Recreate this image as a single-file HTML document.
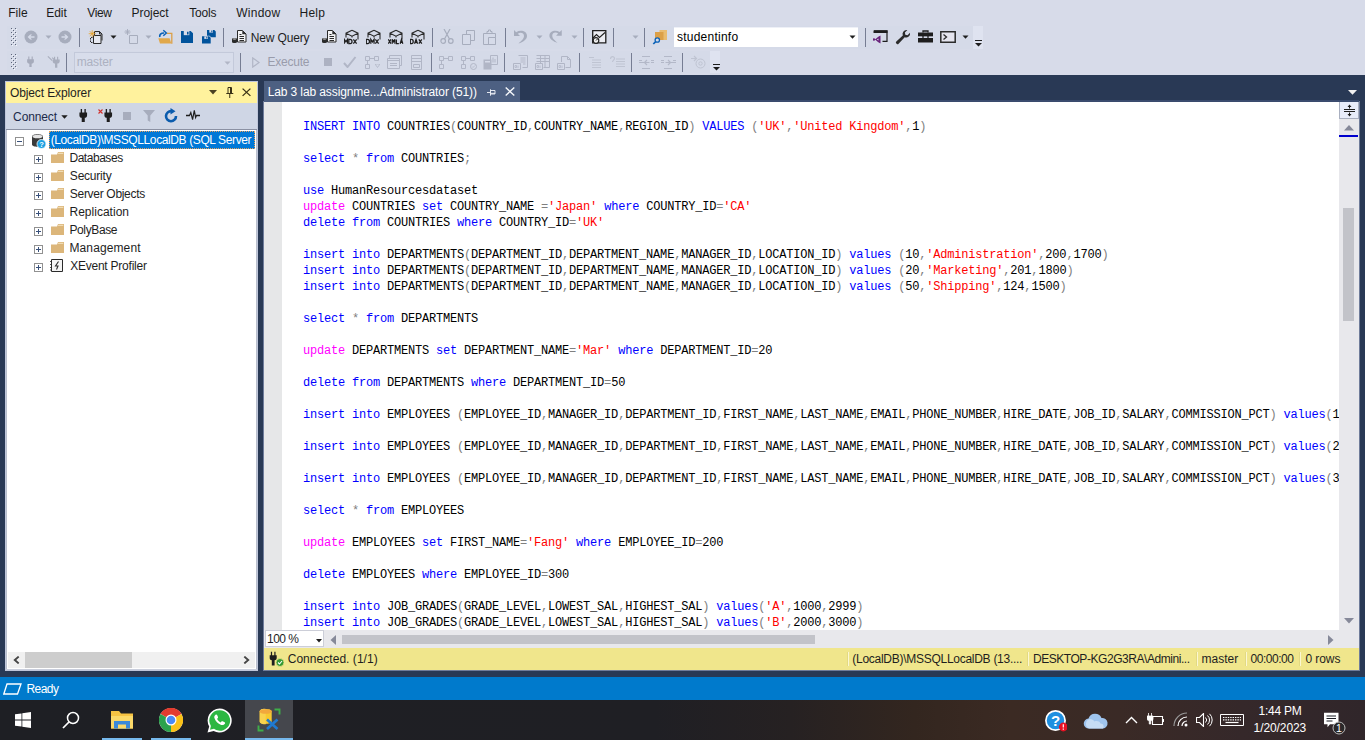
<!DOCTYPE html>
<html><head><meta charset="utf-8"><title>SSMS</title>
<style>
*{box-sizing:border-box;margin:0;padding:0}
html,body{width:1365px;height:740px;overflow:hidden;background:#293955;font-family:"Liberation Sans",sans-serif;font-size:12px;color:#1e1e1e}
.abs{position:absolute}
span.abs,.t{white-space:nowrap}
#chrome{left:0;top:0;width:1365px;height:75px;background:#d7dbe9}
.menu{position:absolute;top:5px;font-size:13px;color:#1b1b1b}
.sep{position:absolute;width:1px;background:#767d93}
.grip{position:absolute;width:5px;height:18px;background-image:radial-gradient(circle,#7f879b 0.6px,transparent 0.9px);background-size:2px 2px;opacity:.9}
#dock{left:0;top:75px;width:1365px;height:602px;background:#293955}
#oe{left:6px;top:82px;width:251px;height:588px;background:#fff;overflow:hidden}
#oetitle{left:0;top:0;width:251px;height:21px;background:#fff29d}
#oebar{left:0;top:21px;width:251px;height:26px;background:#cfd6e5}
.tr{position:absolute;font-size:12px;color:#1e1e1e;white-space:nowrap;letter-spacing:.1px}
.pm{position:absolute;width:9px;height:9px;border:1px solid #919191;background:#fff}
.pm:before{content:"";position:absolute;left:1px;top:3px;width:5px;height:1px;background:#38507a}
.pm.p:after{content:"";position:absolute;left:3px;top:1px;width:1px;height:5px;background:#38507a}
#tab{left:264px;top:81px;width:256px;height:21px;background:#4d6082}
#tabline{left:264px;top:100px;width:1095px;height:2px;background:#3a4b6e}
#ed{left:264px;top:102px;width:1095px;height:568px;background:#fff;overflow:hidden}
#gutter{left:0;top:0;width:18px;height:528px;background:#e6e7e8}
#codeclip{left:18px;top:0;width:1057px;height:528px;overflow:hidden}
pre.code{position:absolute;left:21px;top:17px;font-family:"Liberation Mono",monospace;font-size:12px;line-height:16px;letter-spacing:-0.2px;color:#000;white-space:pre}
.k{color:#0000ff}.m{color:#ff00ff}.s{color:#ff0000}.g{color:#808080}
#vs{left:1075px;top:0;width:20px;height:528px;background:#e8e8ec}
#hs{left:0;top:528px;width:1095px;height:18px;background:#e8e8ec}
#qs{left:0;top:546px;width:1095px;height:22px;background:#f0e68c}
.q{position:absolute;top:4px;font-size:12px;color:#1e1e1e;white-space:nowrap}
.qsep{position:absolute;top:4px;width:1px;height:14px;background:#fbf7d2;box-shadow:-1px 0 0 #e2d982}
#status{left:0;top:677px;width:1365px;height:23px;background:#007acc}
#task{left:0;top:700px;width:1365px;height:40px;background:linear-gradient(90deg,#1e1f24 0%,#1f1f24 48%,#262122 58%,#33261f 67%,#3b2a23 74%,#3a2a26 82%,#35282a 91%,#30262a 100%)}
</style></head><body>
<div id="chrome" class="abs">
<span class="abs" style="left:8.14px;top:6.00px;font-size:12px;line-height:14px;letter-spacing:0.073px;color:#1b1b1b;">File</span>
<span class="abs" style="left:46.24px;top:6.00px;font-size:12px;line-height:14px;letter-spacing:-0.060px;color:#1b1b1b;">Edit</span>
<span class="abs" style="left:87.20px;top:6.00px;font-size:12px;line-height:14px;letter-spacing:-0.333px;color:#1b1b1b;">View</span>
<span class="abs" style="left:131.44px;top:6.00px;font-size:12px;line-height:14px;letter-spacing:-0.027px;color:#1b1b1b;">Project</span>
<span class="abs" style="left:189.26px;top:6.00px;font-size:12px;line-height:14px;letter-spacing:-0.165px;color:#1b1b1b;">Tools</span>
<span class="abs" style="left:236.30px;top:6.00px;font-size:12px;line-height:14px;letter-spacing:0.236px;color:#1b1b1b;">Window</span>
<span class="abs" style="left:299.44px;top:6.00px;font-size:12px;line-height:14px;letter-spacing:0.293px;color:#1b1b1b;">Help</span>
<div class="abs" style="left:7px;top:26px;width:966px;height:23px;background:#d5dae8"></div>
<div class="abs" style="left:973px;top:26px;width:10px;height:23px;background:#dfe3f0"></div>
<div class="abs" style="left:7px;top:51px;width:703px;height:22px;background:#d5dae8"></div>
<div class="abs" style="left:710px;top:51px;width:10px;height:22px;background:#dfe3f0"></div>
<svg class="abs" style="left:11px;top:28px" width="6" height="18" viewBox="0 0 6 18" shape-rendering="crispEdges"><rect x="0" y="0" width="1" height="1" fill="#5d6579"/><rect x="1" y="1" width="1" height="1" fill="#f2f4fa"/><rect x="4" y="0" width="1" height="1" fill="#5d6579"/><rect x="5" y="1" width="1" height="1" fill="#f2f4fa"/><rect x="2" y="2" width="1" height="1" fill="#5d6579"/><rect x="3" y="3" width="1" height="1" fill="#f2f4fa"/><rect x="0" y="4" width="1" height="1" fill="#5d6579"/><rect x="1" y="5" width="1" height="1" fill="#f2f4fa"/><rect x="4" y="4" width="1" height="1" fill="#5d6579"/><rect x="5" y="5" width="1" height="1" fill="#f2f4fa"/><rect x="2" y="6" width="1" height="1" fill="#5d6579"/><rect x="3" y="7" width="1" height="1" fill="#f2f4fa"/><rect x="0" y="8" width="1" height="1" fill="#5d6579"/><rect x="1" y="9" width="1" height="1" fill="#f2f4fa"/><rect x="4" y="8" width="1" height="1" fill="#5d6579"/><rect x="5" y="9" width="1" height="1" fill="#f2f4fa"/><rect x="2" y="10" width="1" height="1" fill="#5d6579"/><rect x="3" y="11" width="1" height="1" fill="#f2f4fa"/><rect x="0" y="12" width="1" height="1" fill="#5d6579"/><rect x="1" y="13" width="1" height="1" fill="#f2f4fa"/><rect x="4" y="12" width="1" height="1" fill="#5d6579"/><rect x="5" y="13" width="1" height="1" fill="#f2f4fa"/><rect x="2" y="14" width="1" height="1" fill="#5d6579"/><rect x="3" y="15" width="1" height="1" fill="#f2f4fa"/><rect x="0" y="16" width="1" height="1" fill="#5d6579"/><rect x="1" y="17" width="1" height="1" fill="#f2f4fa"/><rect x="4" y="16" width="1" height="1" fill="#5d6579"/><rect x="5" y="17" width="1" height="1" fill="#f2f4fa"/></svg><svg class="abs" style="left:11px;top:54px" width="6" height="16" viewBox="0 0 6 16" shape-rendering="crispEdges"><rect x="0" y="0" width="1" height="1" fill="#5d6579"/><rect x="1" y="1" width="1" height="1" fill="#f2f4fa"/><rect x="4" y="0" width="1" height="1" fill="#5d6579"/><rect x="5" y="1" width="1" height="1" fill="#f2f4fa"/><rect x="2" y="2" width="1" height="1" fill="#5d6579"/><rect x="3" y="3" width="1" height="1" fill="#f2f4fa"/><rect x="0" y="4" width="1" height="1" fill="#5d6579"/><rect x="1" y="5" width="1" height="1" fill="#f2f4fa"/><rect x="4" y="4" width="1" height="1" fill="#5d6579"/><rect x="5" y="5" width="1" height="1" fill="#f2f4fa"/><rect x="2" y="6" width="1" height="1" fill="#5d6579"/><rect x="3" y="7" width="1" height="1" fill="#f2f4fa"/><rect x="0" y="8" width="1" height="1" fill="#5d6579"/><rect x="1" y="9" width="1" height="1" fill="#f2f4fa"/><rect x="4" y="8" width="1" height="1" fill="#5d6579"/><rect x="5" y="9" width="1" height="1" fill="#f2f4fa"/><rect x="2" y="10" width="1" height="1" fill="#5d6579"/><rect x="3" y="11" width="1" height="1" fill="#f2f4fa"/><rect x="0" y="12" width="1" height="1" fill="#5d6579"/><rect x="1" y="13" width="1" height="1" fill="#f2f4fa"/><rect x="4" y="12" width="1" height="1" fill="#5d6579"/><rect x="5" y="13" width="1" height="1" fill="#f2f4fa"/><rect x="2" y="14" width="1" height="1" fill="#5d6579"/><rect x="3" y="15" width="1" height="1" fill="#f2f4fa"/></svg>
<div class="sep" style="left:79px;top:28px;height:19px"></div>
<div class="sep" style="left:223px;top:28px;height:19px"></div>
<div class="sep" style="left:432px;top:28px;height:19px"></div>
<div class="sep" style="left:505px;top:28px;height:19px"></div>
<div class="sep" style="left:583px;top:28px;height:19px"></div>
<div class="sep" style="left:613px;top:28px;height:19px"></div>
<div class="sep" style="left:644px;top:28px;height:19px"></div>
<div class="sep" style="left:865px;top:28px;height:19px"></div>
<div class="sep" style="left:66px;top:53px;height:19px"></div>
<div class="sep" style="left:240px;top:53px;height:19px"></div>
<div class="sep" style="left:431px;top:53px;height:19px"></div>
<div class="sep" style="left:504px;top:53px;height:19px"></div>
<div class="sep" style="left:579px;top:53px;height:19px"></div>
<div class="sep" style="left:631px;top:53px;height:19px"></div>
<div class="sep" style="left:682px;top:53px;height:19px"></div>
<svg class="abs" style="left:24px;top:30px" width="14" height="14" viewBox="0 0 14 14" ><circle cx="7" cy="7" r="6.5" fill="#a7adbd"/><path d="M10.5 6.2H6.4l1.7-1.8H6.2L3.6 7l2.6 2.6h1.9L6.4 7.8h4.1z" fill="#d6dbe9"/></svg>
<svg class="abs" style="left:45px;top:35px" width="7" height="4" viewBox="0 0 7 4" ><path d="M0.5 0.5h6L3.5 3.7z" fill="#a7adbd"/></svg>
<svg class="abs" style="left:58px;top:30px" width="14" height="14" viewBox="0 0 14 14" ><circle cx="7" cy="7" r="6.5" fill="#a7adbd"/><path d="M3.5 6.2h4.1L5.9 4.4h1.9L10.4 7 7.8 9.6H5.9l1.7-1.8H3.5z" fill="#d6dbe9"/></svg>
<svg class="abs" style="left:88px;top:29px" width="16" height="16" viewBox="0 0 16 16" ><path d="M6.500 6V2.500h5l2.500 2.500V11.500" fill="none" stroke="#2b2b2b"/><path d="M11.500 2.500v2.500h2.500" fill="none" stroke="#2b2b2b"/><path d="M5.500 6.500h7.500v8h-7.500z" fill="#e6e8f0" stroke="#2b2b2b"/><path d="M4.500 8.500h-2v5h2" fill="none" stroke="#2b2b2b" stroke-dasharray="1.500 1"/><path d="M4.200 1.200v7M.7 4.700h7M1.700 2.200l5 5M6.700 2.200l-5 5" stroke="#e9a020" stroke-width=".75"/></svg>
<svg class="abs" style="left:110px;top:35px" width="7" height="4" viewBox="0 0 7 4" ><path d="M0.5 0.5h6L3.5 3.7z" fill="#1e1e1e"/></svg>
<svg class="abs" style="left:124px;top:29px" width="16" height="16" viewBox="0 0 16 16" ><path d="M5.5 6.500h8v8h-8z" fill="none" stroke="#a7adbd"/><path d="M3.5 0v6M.5 3h6M1.500 1l4 4M5.500 1l-4 4" stroke="#a7adbd" stroke-width=".9"/></svg>
<svg class="abs" style="left:145px;top:35px" width="7" height="4" viewBox="0 0 7 4" ><path d="M0.5 0.5h6L3.5 3.7z" fill="#a7adbd"/></svg>
<svg class="abs" style="left:157px;top:29px" width="16" height="16" viewBox="0 0 16 16" ><path d="M9.500 4.300h5.300v10.500" fill="none" stroke="#dca048" stroke-width="1.300"/><path d="M1.300 9.300h11.300l1.700 5.200H3z" fill="#e1a84a"/><path d="M2.800 8c-.5-2.500 1-4 4.200-4" fill="none" stroke="#0b62b8" stroke-width="1.700"/><path d="M6.300 1.300L9.300 4 6.300 6.700" fill="none" stroke="#0b62b8" stroke-width="1.500"/></svg>
<svg class="abs" style="left:181px;top:31px" width="12" height="12" viewBox="0 0 13 13" ><path d="M0 0h10.500L13 2.500V13H0z" fill="#00539c"/><path d="M3 0h6v4.500H3z" fill="#d6dbe9"/><path d="M6.500 .8h1.700v2.900H6.500z" fill="#00539c"/></svg>
<svg class="abs" style="left:202px;top:29px" width="15" height="16" viewBox="0 0 15 16" ><path d="M5 1h7.300l1.500 1.500v5.800H5z" fill="#00539c"/><path d="M7.300 1h3.700v2.600H7.300z" fill="#d6dbe9"/><path d="M9.300 1.400h1.100v1.800H9.300z" fill="#00539c"/><path d="M-.6 6.700h8.200l1.700 1.700v6.600H-.6z" fill="#d6dbe9"/><path d="M0 7.300h7.200l1.500 1.500v5.600H0z" fill="#00539c"/><path d="M2.300 7.300h3.700v2.600H2.300z" fill="#d6dbe9"/><path d="M4.300 7.700h1.100v1.800H4.300z" fill="#00539c"/></svg>
<svg class="abs" style="left:232px;top:30px" width="16" height="15" viewBox="0 0 16 15" ><path d="M5.500 .5h5l3.500 3.500v8h-8.500z" fill="#f4f4f6" stroke="#2b2b2b"/><path d="M10.300 .5v3.700h3.700z" fill="#2b2b2b"/><path d="M7.500 4.500h2M7.500 6.500h4.500M7.500 8.500h4.500M7.500 10.500h4.500" stroke="#2b2b2b"/><path d="M0 9c0-1.300 5-1.300 5 0v3c0 1.400-5 1.400-5 0z" fill="#2b2b2b"/><ellipse cx="2.500" cy="9" rx="1.900" ry=".7" fill="#b5b5b5"/></svg>
<span class="abs" style="left:250.74px;top:31.00px;font-size:12px;line-height:14px;letter-spacing:-0.142px;color:#1e1e1e;">New Query</span>
<svg class="abs" style="left:322px;top:30px" width="16" height="15" viewBox="0 0 16 15" ><path d="M5.500 .5h5l3.500 3.500v8h-8.500z" fill="#f4f4f6" stroke="#2b2b2b"/><path d="M10.300 .5v3.700h3.700z" fill="#2b2b2b"/><path d="M7.500 4.500h2M7.500 6.500h4.500M7.500 8.500h4.500M7.500 10.500h4.500" stroke="#2b2b2b"/><path d="M0 9c0-1.300 5-1.300 5 0v3c0 1.400-5 1.400-5 0z" fill="#2b2b2b"/><ellipse cx="2.500" cy="9" rx="1.900" ry=".7" fill="#b5b5b5"/></svg>
<svg class="abs" style="left:344px;top:29px" width="16" height="16" viewBox="0 0 16 16" ><path d="M8 1.200l6 3v6.300M8 1.200l-6 3v4.300M2 4.200l6 3 6-3M8 7.200v1.300" fill="none" stroke="#2b2b2b" stroke-width="1.100"/><path transform="translate(0.30 10.400) scale(1.078 .86)" d="M0 5V0l1.500 2.800L3 0v5" fill="none" stroke="#1e1e1e" stroke-width="1.250" vector-effect="non-scaling-stroke"/><path transform="translate(4.83 10.400) scale(1.078 .86)" d="M0 0v5h1.300c2.200 0 2.200-5 0-5z" fill="none" stroke="#1e1e1e" stroke-width="1.250" vector-effect="non-scaling-stroke"/><path transform="translate(9.37 10.400) scale(1.078 .86)" d="M0 0l3 5M3 0L0 5" fill="none" stroke="#1e1e1e" stroke-width="1.250" vector-effect="non-scaling-stroke"/></svg>
<svg class="abs" style="left:366px;top:29px" width="16" height="16" viewBox="0 0 16 16" ><path d="M8 1.200l6 3v6.300M8 1.200l-6 3v4.300M2 4.200l6 3 6-3M8 7.200v1.300" fill="none" stroke="#2b2b2b" stroke-width="1.100"/><path transform="translate(0.30 10.400) scale(1.078 .86)" d="M0 0v5h1.300c2.200 0 2.200-5 0-5z" fill="none" stroke="#1e1e1e" stroke-width="1.250" vector-effect="non-scaling-stroke"/><path transform="translate(4.83 10.400) scale(1.078 .86)" d="M0 5V0l1.500 2.800L3 0v5" fill="none" stroke="#1e1e1e" stroke-width="1.250" vector-effect="non-scaling-stroke"/><path transform="translate(9.37 10.400) scale(1.078 .86)" d="M0 0l3 5M3 0L0 5" fill="none" stroke="#1e1e1e" stroke-width="1.250" vector-effect="non-scaling-stroke"/></svg>
<svg class="abs" style="left:388px;top:29px" width="16" height="16" viewBox="0 0 16 16" ><path d="M8 1.200l6 3v6.300M8 1.200l-6 3v4.300M2 4.200l6 3 6-3M8 7.200v1.300" fill="none" stroke="#2b2b2b" stroke-width="1.100"/><path transform="translate(0.30 10.400) scale(0.883 .86)" d="M0 0l3 5M3 0L0 5" fill="none" stroke="#1e1e1e" stroke-width="1.250" vector-effect="non-scaling-stroke"/><path transform="translate(4.25 10.400) scale(0.883 .86)" d="M0 5V0l1.500 2.800L3 0v5" fill="none" stroke="#1e1e1e" stroke-width="1.250" vector-effect="non-scaling-stroke"/><path transform="translate(8.20 10.400) scale(0.883 .86)" d="M.2 0v5h2.800" fill="none" stroke="#1e1e1e" stroke-width="1.250" vector-effect="non-scaling-stroke"/><path transform="translate(12.15 10.400) scale(0.883 .86)" d="M0 5l1.500-5 1.500 5M.6 3.400h1.800" fill="none" stroke="#1e1e1e" stroke-width="1.250" vector-effect="non-scaling-stroke"/></svg>
<svg class="abs" style="left:410px;top:29px" width="16" height="16" viewBox="0 0 16 16" ><path d="M8 1.200l6 3v6.300M8 1.200l-6 3v4.300M2 4.200l6 3 6-3M8 7.200v1.300" fill="none" stroke="#2b2b2b" stroke-width="1.100"/><path transform="translate(0.30 10.400) scale(0.989 .86)" d="M0 0v5h1.300c2.200 0 2.200-5 0-5z" fill="none" stroke="#1e1e1e" stroke-width="1.250" vector-effect="non-scaling-stroke"/><path transform="translate(4.57 10.400) scale(0.989 .86)" d="M0 5l1.500-5 1.500 5M.6 3.400h1.800" fill="none" stroke="#1e1e1e" stroke-width="1.250" vector-effect="non-scaling-stroke"/><path transform="translate(8.83 10.400) scale(0.989 .86)" d="M0 0l3 5M3 0L0 5" fill="none" stroke="#1e1e1e" stroke-width="1.250" vector-effect="non-scaling-stroke"/></svg>
<svg class="abs" style="left:440px;top:29px" width="14" height="16" viewBox="0 0 14 16" ><path d="M4 0l5.500 10M10 0L4.500 10" stroke="#a7adbd" stroke-width="1.200" fill="none"/><circle cx="3.200" cy="12" r="2.300" fill="none" stroke="#a7adbd" stroke-width="1.200"/><circle cx="10.800" cy="12" r="2.300" fill="none" stroke="#a7adbd" stroke-width="1.200"/></svg>
<svg class="abs" style="left:462px;top:29px" width="14" height="16" viewBox="0 0 14 16" ><path d="M4.500 1.500h8v10h-8z" fill="none" stroke="#a7adbd"/><path d="M.5 5.500h8v10h-8z" fill="#d6dbe9" stroke="#a7adbd"/></svg>
<svg class="abs" style="left:483px;top:29px" width="14" height="16" viewBox="0 0 14 16" ><path d="M.5 4.500h12v11H.5z" fill="none" stroke="#a7adbd"/><path d="M4 4.500V2.500h1.500V1h2v1.500H9v2" fill="none" stroke="#a7adbd"/><path d="M5.500 8.500h7v7h-7z" fill="#d6dbe9" stroke="#a7adbd"/></svg>
<svg class="abs" style="left:513px;top:29px" width="16" height="16" viewBox="0 0 16 16" ><path d="M1 1v6h6L4.800 4.800C7 3 11 3.500 11 7c0 3-3 5-5.500 7.500C10 13 14 10.500 14 7 14 2 7.500 .5 3.200 3.200z" fill="#a7adbd"/></svg>
<svg class="abs" style="left:536px;top:35px" width="7" height="4" viewBox="0 0 7 4" ><path d="M0.5 0.5h6L3.5 3.7z" fill="#a7adbd"/></svg>
<svg class="abs" style="left:549px;top:29px" width="16" height="16" viewBox="0 0 16 16" ><path d="M15 1v6H9l2.200-2.200C9 3 5 3.500 5 7c0 3 3 5 5.500 7.500C6 13 2 10.500 2 7 2 2 8.500 .5 12.800 3.200z" fill="#a7adbd" transform="translate(-1.5 0) scale(.95)"/></svg>
<svg class="abs" style="left:571px;top:35px" width="7" height="4" viewBox="0 0 7 4" ><path d="M0.5 0.5h6L3.5 3.7z" fill="#a7adbd"/></svg>
<svg class="abs" style="left:592px;top:30px" width="15" height="14" viewBox="0 0 15 14" ><path d="M.7 .7h13.100v12.100H.7z" fill="#ecedf3" stroke="#1e1e1e" stroke-width="1.300"/><path d="M1 8l3.500-3.500 3 3L13 2.500" fill="none" stroke="#1e1e1e" stroke-width="1.100"/><circle cx="4" cy="10.500" r="2.800" fill="#f3f3f3" stroke="#1e1e1e" stroke-width="1.200"/><path d="M4 10.500l1.500-1.500" stroke="#1e1e1e"/></svg>
<svg class="abs" style="left:632px;top:35px" width="7" height="4" viewBox="0 0 7 4" ><path d="M0.5 0.5h6L3.5 3.7z" fill="#a7adbd"/></svg>
<svg class="abs" style="left:652px;top:29px" width="16" height="16" viewBox="0 0 16 16" ><path d="M7.500 1h7.500v10H7.500z" fill="#e9bc70"/><path d="M3 3h8.500v8H3z" fill="#dca048"/><circle cx="5.300" cy="11" r="2.200" fill="#d6dbe9" stroke="#0b62b8" stroke-width="1.300"/><path d="M3.700 12.700L1.300 15" stroke="#0b62b8" stroke-width="1.700"/></svg>
<div class="abs" style="left:674px;top:27px;width:184px;height:20px;background:#fff;border-top:1px solid #eef0f7"></div>
<span class="abs" style="left:676.90px;top:30.00px;font-size:12px;line-height:14px;letter-spacing:0.250px;color:#000;">studentinfo</span>
<svg class="abs" style="left:849px;top:35px" width="7" height="4" viewBox="0 0 7 4" ><path d="M0.5 0.5h6L3.5 3.7z" fill="#1e1e1e"/></svg>
<svg class="abs" style="left:873px;top:30px" width="15" height="14" viewBox="0 0 15 14" ><path d="M1 .8h13v10.500H9.500" fill="none" stroke="#1e1e1e" stroke-width="1.200"/><path d="M.5 .5h14v2.500H.5z" fill="#1e1e1e"/><path d="M7.500 5.500v8L5.300 12.300 2.300 9.800 1 11 0 10.300V8.700L1 8l1.300 1.200L5.300 6.700zM5.500 8.600L3.800 9.500l1.700 1z" fill="#68217a"/></svg>
<svg class="abs" style="left:895px;top:29px" width="16" height="16" viewBox="0 0 16 16" ><path d="M11.500 1a4 4 0 0 0-3.700 5.400L1.300 12.500a1.300 1.300 0 0 0 0 1.900l.4.400a1.300 1.300 0 0 0 1.900 0L9.700 8.300A4 4 0 0 0 15 3.700L12.500 6.200 10.300 5.800 9.900 3.600 12.400 1.100A4 4 0 0 0 11.500 1z" fill="#2b2b2b"/></svg>
<svg class="abs" style="left:918px;top:30px" width="15" height="13" viewBox="0 0 15 13" ><path d="M5 2.500V1h5v1.500" fill="none" stroke="#1e1e1e" stroke-width="1.300"/><path d="M0 2.500h15v4H0z" fill="#1e1e1e"/><path d="M0 8h15v4.500H0z" fill="#1e1e1e"/><path d="M4 5.500h2v3.500H4zM9 5.500h2v3.500H9z" fill="#1e1e1e"/><path d="M0 6.700h15v1.100H0z" fill="#d6dbe9"/><path d="M4.500 6.500h1v2h-1zM9.500 6.500h1v2h-1z" fill="#1e1e1e"/></svg>
<svg class="abs" style="left:940px;top:31px" width="16" height="12" viewBox="0 0 16 12" ><path d="M.8 .8h14.400v10.400H.8z" fill="#e4e4ee" stroke="#2b2b2b" stroke-width="1.500"/><path d="M3.500 3.500L6.500 6l-3 2.500" fill="none" stroke="#2b2b2b" stroke-width="1.300"/></svg>
<svg class="abs" style="left:962px;top:35px" width="7" height="4" viewBox="0 0 7 4" ><path d="M0.5 0.5h6L3.5 3.7z" fill="#1e1e1e"/></svg>
<svg class="abs" style="left:975px;top:40px" width="7" height="7" viewBox="0 0 7 7" ><path d="M0 .5h7" stroke="#1e1e1e" stroke-width="1"/><path d="M0 3h7L3.500 6.500z" fill="#1e1e1e"/></svg>
<svg class="abs" style="left:25.5px;top:55px" width="9" height="14" viewBox="0 0 12 14.5" ><path d="M3 0h1.500v3.500H3zM7.500 0H9v3.500H7.500zM1.500 3.500h9V7c0 1.500-1.500 2.500-3 2.500V14h-3V9.500c-1.500 0-3-1-3-2.500z" fill="#a6abbb"/></svg>
<svg class="abs" style="left:47px;top:55px" width="14" height="14" viewBox="0 0 16 15" ><path d="M1 1l5 5M6 2.500l4 4" stroke="#a9aebd" stroke-width="1.300"/><path d="M8 1.500h1.300v3H8zM11.500 1.500h1.300v3h-1.300zM6.500 4.500h8V7c0 1.500-1.300 2.300-2.700 2.300V14H9.200V9.300C7.800 9.300 6.500 8.500 6.500 7z" fill="#a9aebd"/></svg>
<div class="abs" style="left:74px;top:52px;width:160px;height:21px;border:1px solid #c3c9da;background:#d8ddeb"></div>
<span class="abs" style="left:76.72px;top:55.00px;font-size:12px;line-height:14px;letter-spacing:-0.132px;color:#acb1c1;">master</span>
<svg class="abs" style="left:224px;top:61px" width="7" height="4" viewBox="0 0 7 4" ><path d="M0.5 0.5h6L3.5 3.7z" fill="#b1b6c6"/></svg>
<svg class="abs" style="left:252px;top:57px" width="8" height="11" viewBox="0 0 8 11" ><path d="M.7 .9v9.200L7 5.500z" fill="none" stroke="#b1b6c6" stroke-width="1.200"/></svg>
<span class="abs" style="left:267.54px;top:55.00px;font-size:12px;line-height:14px;letter-spacing:-0.230px;color:#999cab;">Execute</span>
<div class="abs" style="left:324px;top:58px;width:8px;height:8px;background:#adb2c2"></div>
<svg class="abs" style="left:343px;top:56px" width="14" height="12" viewBox="0 0 14 12" ><path d="M1 7l3.500 4L12.500 1" fill="none" stroke="#b1b6c6" stroke-width="2"/></svg>
<svg class="abs" style="left:365px;top:55px" width="15" height="15" viewBox="0 0 15 15" ><path d="M.5 1.500h4v4h-4zM9.500 1.500h4v4h-4zM.5 9.500h4v4h-4z" fill="none" stroke="#b1b6c6"/><path d="M4.500 3.500h5M2.500 5.500v4" stroke="#b1b6c6"/></svg><svg class="abs" style="left:375px;top:64px" width="5" height="4" viewBox="0 0 5 4" ><path d="M0 0h5L2.500 3.500z" fill="none" stroke="#b1b6c6" stroke-width=".8"/></svg>
<svg class="abs" style="left:387px;top:55px" width="15" height="15" viewBox="0 0 15 15" ><path d="M2.500 .5h12v10h-12z" fill="none" stroke="#b1b6c6"/><path d="M.5 3.500h12v10H.5z" fill="#d6dbe9" stroke="#b1b6c6"/><path d="M.5 5.500h12M3 8.500h7M3 10.500h7" stroke="#b1b6c6"/></svg>
<svg class="abs" style="left:411px;top:55px" width="11" height="15" viewBox="0 0 11 15" ><path d="M.5 .5h10v14H.5z" fill="none" stroke="#b1b6c6"/><path d="M.5 3.500h10M.5 6.500h10M2.500 9.500h6v3h-6z" fill="none" stroke="#b1b6c6"/></svg>
<svg class="abs" style="left:439px;top:55px" width="15" height="15" viewBox="0 0 15 15" ><path d="M.5 1.500h4v4h-4zM9.500 1.500h4v4h-4zM.5 9.500h4v4h-4z" fill="none" stroke="#b1b6c6"/><path d="M4.500 3.500h5M2.500 5.500v4" stroke="#b1b6c6"/></svg>
<svg class="abs" style="left:461px;top:55px" width="15" height="15" viewBox="0 0 15 15" ><path d="M.5 1.500h4v4h-4zM9.500 1.500h4v4h-4zM.5 9.500h4v4h-4z" fill="none" stroke="#b1b6c6"/><path d="M4.500 3.500h5M2.500 5.500v4" stroke="#b1b6c6"/></svg><svg class="abs" style="left:470px;top:63px" width="7" height="7" viewBox="0 0 7 7" ><circle cx="3.500" cy="3.500" r="3" fill="none" stroke="#b1b6c6"/><path d="M2 3.500l1 1 2-2" fill="none" stroke="#b1b6c6" stroke-width=".8"/></svg>
<svg class="abs" style="left:483px;top:55px" width="15" height="15" viewBox="0 0 15 15" ><path d="M7.500 .5h7v9h-7z" fill="none" stroke="#b1b6c6"/><path d="M10 2.500v5M12 4v3.500" stroke="#b1b6c6"/><path d="M.5 4.500h8v10h-8z" fill="#b1b6c6"/><path d="M2 6h5v1.500H2z" fill="#d6dbe9"/></svg>
<svg class="abs" style="left:513px;top:55px" width="15" height="15" viewBox="0 0 15 15" ><path d="M5.500 .5h9v12h-5" fill="none" stroke="#b1b6c6"/><path d="M7.500 3h5M7.500 5h5M7.500 7h5M10 9h2.500" stroke="#b1b6c6" stroke-width=".9"/><path d="M.5 8.500h7v6h-7z" fill="#d6dbe9" stroke="#b1b6c6"/><path d="M2 10.500h1.500v2H2zM5 10.500v2.500" fill="none" stroke="#b1b6c6" stroke-width=".8"/></svg>
<svg class="abs" style="left:535px;top:55px" width="15" height="15" viewBox="0 0 15 15" ><path d="M1.500 .5h13v12h-6" fill="none" stroke="#b1b6c6"/><path d="M1.500 3.500h13M1.500 6.500h13M5.500 .5v8M10 .5v12" stroke="#b1b6c6"/><path d="M.5 8.500h7v6h-7z" fill="#d6dbe9" stroke="#b1b6c6"/><path d="M2 10.500h1.500v2H2zM5 10.500v2.500" fill="none" stroke="#b1b6c6" stroke-width=".8"/></svg>
<svg class="abs" style="left:557px;top:55px" width="15" height="15" viewBox="0 0 15 15" ><path d="M4.500 7V1.500h6l3 3v8h-5" fill="none" stroke="#b1b6c6"/><path d="M10.500 1.500v3h3" fill="none" stroke="#b1b6c6"/><path d="M.5 8.500h7v6h-7z" fill="#d6dbe9" stroke="#b1b6c6"/><path d="M2 10.500h1.500v2H2zM5 10.500v2.500" fill="none" stroke="#b1b6c6" stroke-width=".8"/></svg>
<svg class="abs" style="left:589px;top:57px" width="12" height="12" viewBox="0 0 12 12" ><path d="M0 .5h5M3 3h9M3 5.500h9M3 8h9M3 10.500h9" stroke="#bfc4d2"/></svg>
<svg class="abs" style="left:610px;top:56px" width="15" height="13" viewBox="0 0 15 13" ><path d="M.5 3c0-3 4-3 4-.5 0 1.500-2 1.800-2 3.500" fill="none" stroke="#bfc4d2" stroke-width="1.200"/><path d="M6 3h9M6 5.500h9M6 8h9M6 10.500h9" stroke="#bfc4d2"/></svg>
<svg class="abs" style="left:639px;top:56px" width="15" height="13" viewBox="0 0 15 13" ><path d="M3 .5h8M0 6.500h5M0 4.500h3M12 4.500h3M12 6.500h3M3 12.500h8" stroke="#b3b8c8"/><path d="M10.500 6.500H6M8 4L5.500 6.500 8 9" fill="none" stroke="#b3b8c8" stroke-width="1.200"/></svg>
<svg class="abs" style="left:661px;top:56px" width="15" height="13" viewBox="0 0 15 13" ><path d="M3 .5h8M0 6.500h3M0 4.500h3M12 4.500h3M10 6.500h5M3 12.500h8" stroke="#b3b8c8"/><path d="M4.500 6.500H9M7 4l2.500 2.500L7 9" fill="none" stroke="#b3b8c8" stroke-width="1.200"/></svg>
<svg class="abs" style="left:691px;top:55px" width="15" height="15" viewBox="0 0 15 15" ><path d="M0 3.500h5M3 1l2.500 2.500L3 6" fill="none" stroke="#bfc4d2" stroke-width="1.200"/><circle cx="9.500" cy="8.500" r="4.500" fill="none" stroke="#bfc4d2"/><circle cx="9.500" cy="8.500" r="1.700" fill="none" stroke="#bfc4d2"/></svg>
<svg class="abs" style="left:713px;top:64px" width="7" height="7" viewBox="0 0 7 7" ><path d="M0 .5h7" stroke="#1e1e1e" stroke-width="1"/><path d="M0 3h7L3.500 6.500z" fill="#1e1e1e"/></svg>
</div>
<div id="dock" class="abs"></div>
<div class="abs" style="left:5px;top:81px;width:253px;height:590px;background:#bfc6da"></div>
<div class="abs" style="left:263px;top:101px;width:1097px;height:570px;background:#6f7c9a"></div>
<div id="oe" class="abs">
<div id="oetitle" class="abs"><span class="abs" style="left:3.96px;top:4.00px;font-size:12px;line-height:14px;letter-spacing:-0.109px;color:#1e1e1e;">Object Explorer</span>
<svg class="abs" style="left:203px;top:8px" width="8" height="5" viewBox="0 0 8 5" ><path d="M0 0h8L4 4.500z" fill="#4a4022"/></svg>
<svg class="abs" style="left:220px;top:5px" width="8" height="11" viewBox="0 0 8 11" ><path d="M2 .5h3.500v5.500M2 .5v5.500M4.500 .5v5.500M.3 6.500h7M3.750 6.500v4.500" fill="none" stroke="#3a3216" stroke-width="1"/></svg>
<svg class="abs" style="left:235.5px;top:6px" width="9" height="8.5" viewBox="0 0 9 8.5" ><path d="M.6 .6l7.800 7.300M8.400 .6L.6 7.900" stroke="#3a3216" stroke-width="1.300"/></svg>
</div><div id="oebar" class="abs">
<span class="abs" style="left:7.10px;top:7.00px;font-size:12px;line-height:14px;letter-spacing:-0.123px;color:#1b2a4a;">Connect</span>
<svg class="abs" style="left:55px;top:12px" width="7" height="4" viewBox="0 0 7 4" ><path d="M.3 .3h6.400L3.500 3.800z" fill="#1e1e1e"/></svg>
<svg class="abs" style="left:73px;top:6px" width="8.5" height="13" viewBox="0 0 10 13" preserveAspectRatio="none"><path d="M2 0h1.600v3.500H2zM6.400 0H8v3.500H6.400zM.5 3.500h9v3c0 1.400-1.300 2.300-2.700 2.300V13H3.200V8.800C1.800 8.800.5 7.900.5 6.500z" fill="#1e1e1e"/></svg>
<svg class="abs" style="left:92px;top:6px" width="5" height="5" viewBox="0 0 5 5" ><path d="M.5 .5l4 4M4.500 .5l-4 4" stroke="#d0312d" stroke-width="1.100"/></svg><svg class="abs" style="left:98px;top:6px" width="8.5" height="13" viewBox="0 0 10 13" preserveAspectRatio="none"><path d="M2 0h1.600v3.500H2zM6.400 0H8v3.500H6.400zM.5 3.500h9v3c0 1.400-1.300 2.300-2.700 2.300V13H3.200V8.800C1.800 8.800.5 7.900.5 6.500z" fill="#1e1e1e"/></svg>
<div class="abs" style="left:117px;top:9px;width:8px;height:8px;background:#a7adbd"></div>
<svg class="abs" style="left:137px;top:7px" width="12" height="13" viewBox="0 0 12 13" ><path d="M0 0h12L7.300 5.500V12l-2.600-1.500v-5z" fill="#a7adbd"/></svg>
<svg class="abs" style="left:158px;top:5px" width="14" height="15" viewBox="0 0 14 15" ><path d="M7.500 3.200A5 5 0 1 0 12 8" fill="none" stroke="#0b5cad" stroke-width="2.600"/><path d="M6.500 0l5 3.200-5 3.200z" fill="#0b5cad"/></svg>
<svg class="abs" style="left:180px;top:7px" width="14" height="10" viewBox="0 0 16 10" preserveAspectRatio="none"><path d="M0 5.500h4l1.500-3 2 7 2-9 1.500 7 1-2h4" fill="none" stroke="#1e1e1e" stroke-width="1.300"/></svg>
</div>
<div class="abs" style="left:0;top:47px;width:251px;height:1px;background:#8b91a3"></div>
<div class="pm" style="left:9px;top:55px"></div><div class="abs" style="left:0;top:48px;width:1px;height:540px;background:#b9bfcd"></div><div class="abs" style="left:250px;top:48px;width:1px;height:540px;background:#b9bfcd"></div>
<svg class="abs" style="left:25px;top:51px" width="16" height="16" viewBox="0 0 16 16" ><path d="M1 3.500c0-3 11-3 11 0v8c0 3-11 3-11 0z" fill="#3a3a3a"/><ellipse cx="6.500" cy="3.500" rx="5" ry="1.800" fill="#e4e4e4"/><circle cx="10.500" cy="11" r="4.500" fill="#1ba1e2" stroke="#fff" stroke-width=".8"/><text x="10.500" y="14" font-family="Liberation Sans" font-weight="bold" font-size="7.500" fill="#fff" text-anchor="middle">?</text></svg>
<div class="abs" style="left:43px;top:49px;width:206px;height:18px;background:#0078d7;border:1px dotted #e6a15c"></div>
<span class="abs" style="left:44.68px;top:51.00px;font-size:12px;line-height:14px;letter-spacing:-0.387px;color:#fff;">(LocalDB)\MSSQLLocalDB (SQL Server</span>
<div class="pm p" style="left:28px;top:73px"></div>
<svg class="abs" style="left:45px;top:70px" width="13" height="11" viewBox="0 0 13 11" ><path d="M13 0H7L6 2.500H0V11h13z" fill="#dcb67a"/><path d="M7.300 .7h5v1.300h-5.500z" fill="#f0dcb4"/></svg>
<span class="abs" style="left:63.44px;top:69.00px;font-size:12px;line-height:14px;letter-spacing:-0.460px;color:#1e1e1e;">Databases</span>
<div class="pm p" style="left:28px;top:91px"></div>
<svg class="abs" style="left:45px;top:88px" width="13" height="11" viewBox="0 0 13 11" ><path d="M13 0H7L6 2.500H0V11h13z" fill="#dcb67a"/><path d="M7.300 .7h5v1.300h-5.500z" fill="#f0dcb4"/></svg>
<span class="abs" style="left:63.86px;top:87.00px;font-size:12px;line-height:14px;letter-spacing:-0.226px;color:#1e1e1e;">Security</span>
<div class="pm p" style="left:28px;top:109px"></div>
<svg class="abs" style="left:45px;top:106px" width="13" height="11" viewBox="0 0 13 11" ><path d="M13 0H7L6 2.500H0V11h13z" fill="#dcb67a"/><path d="M7.300 .7h5v1.300h-5.500z" fill="#f0dcb4"/></svg>
<span class="abs" style="left:63.86px;top:105.00px;font-size:12px;line-height:14px;letter-spacing:-0.309px;color:#1e1e1e;">Server Objects</span>
<div class="pm p" style="left:28px;top:127px"></div>
<svg class="abs" style="left:45px;top:124px" width="13" height="11" viewBox="0 0 13 11" ><path d="M13 0H7L6 2.500H0V11h13z" fill="#dcb67a"/><path d="M7.300 .7h5v1.300h-5.500z" fill="#f0dcb4"/></svg>
<span class="abs" style="left:63.44px;top:123.00px;font-size:12px;line-height:14px;letter-spacing:0.024px;color:#1e1e1e;">Replication</span>
<div class="pm p" style="left:28px;top:145px"></div>
<svg class="abs" style="left:45px;top:142px" width="13" height="11" viewBox="0 0 13 11" ><path d="M13 0H7L6 2.500H0V11h13z" fill="#dcb67a"/><path d="M7.300 .7h5v1.300h-5.500z" fill="#f0dcb4"/></svg>
<span class="abs" style="left:63.44px;top:141.00px;font-size:12px;line-height:14px;letter-spacing:-0.380px;color:#1e1e1e;">PolyBase</span>
<div class="pm p" style="left:28px;top:163px"></div>
<svg class="abs" style="left:45px;top:160px" width="13" height="11" viewBox="0 0 13 11" ><path d="M13 0H7L6 2.500H0V11h13z" fill="#dcb67a"/><path d="M7.300 .7h5v1.300h-5.500z" fill="#f0dcb4"/></svg>
<span class="abs" style="left:63.44px;top:159.00px;font-size:12px;line-height:14px;letter-spacing:0.116px;color:#1e1e1e;">Management</span>
<div class="pm p" style="left:28px;top:181px"></div>
<svg class="abs" style="left:44px;top:177px" width="13" height="13" viewBox="0 0 13 13" ><path d="M1.500 .5h11v12h-11z" fill="#f4f4f4" stroke="#2b2b2b"/><path d="M0 2.500h2M0 5.500h2M0 8.500h2M0 11h2" stroke="#2b2b2b" stroke-width=".8"/><path d="M8.500 2.500L5.500 7h2.500l-1.500 3.500" fill="none" stroke="#2b2b2b" stroke-width="1.100"/></svg>
<span class="abs" style="left:64.16px;top:177.00px;font-size:12px;line-height:14px;letter-spacing:-0.230px;color:#1e1e1e;">XEvent Profiler</span>
<div class="abs" style="left:2px;top:570px;width:247px;height:16px;background:#f0f0f0"></div>
<div class="abs" style="left:19px;top:570px;width:107px;height:16px;background:#cdcdcd"></div>
<svg class="abs" style="left:7px;top:574px" width="7" height="8" viewBox="0 0 7 8" ><path d="M5.700 .6L1.800 4l3.900 3.400" fill="none" stroke="#454545" stroke-width="1.900"/></svg>
<svg class="abs" style="left:237px;top:574px" width="7" height="8" viewBox="0 0 7 8" ><path d="M1.300 .6L5.200 4 1.300 7.400" fill="none" stroke="#454545" stroke-width="1.900"/></svg>
<div class="abs" style="left:0;top:587px;width:251px;height:1px;background:#c9cedc"></div>
</div>
<div id="tabline" class="abs"></div><div id="tab" class="abs"><span class="abs" style="left:3.64px;top:4.00px;font-size:12px;line-height:14px;letter-spacing:-0.105px;color:#fff;">Lab 3 lab assignme...Administrator (51))</span>
<svg class="abs" style="left:223px;top:7.5px" width="9" height="7" viewBox="0 0 9 7" ><path d="M0 3.500h3.500M3.500 .3v6.400M3.500 1.500h4.500v3.500h-4.500M3.500 4.300h4.500" fill="none" stroke="#f4f6fa" stroke-width=".9"/></svg>
<svg class="abs" style="left:241px;top:6px" width="10" height="9" viewBox="0 0 10 9" ><path d="M.7 .6l8.600 7.800M9.300 .6L.7 8.400" stroke="#f4f6fa" stroke-width="1.400"/></svg>
</div>
<svg class="abs" style="left:1348px;top:90px" width="9" height="5" viewBox="0 0 9 5" ><path d="M0 0h9L4.500 4.800z" fill="#f0f0f0"/></svg>
<div id="ed" class="abs"><div id="gutter" class="abs"></div><div id="codeclip" class="abs"><pre class="code"><span class="k">INSERT</span> <span class="k">INTO</span> COUNTRIES<span class="g">(</span>COUNTRY_ID<span class="g">,</span>COUNTRY_NAME<span class="g">,</span>REGION_ID<span class="g">)</span> <span class="k">VALUES</span> <span class="g">(</span><span class="s">'UK'</span><span class="g">,</span><span class="s">'United Kingdom'</span><span class="g">,</span>1<span class="g">)</span>

<span class="k">select</span> <span class="g">*</span> <span class="k">from</span> COUNTRIES<span class="g">;</span>

<span class="k">use</span> HumanResourcesdataset
<span class="m">update</span> COUNTRIES <span class="k">set</span> COUNTRY_NAME <span class="g">=</span><span class="s">'Japan'</span> <span class="k">where</span> COUNTRY_ID<span class="g">=</span><span class="s">'CA'</span>
<span class="k">delete</span> <span class="k">from</span> COUNTRIES <span class="k">where</span> COUNTRY_ID<span class="g">=</span><span class="s">'UK'</span>

<span class="k">insert</span> <span class="k">into</span> DEPARTMENTS<span class="g">(</span>DEPARTMENT_ID<span class="g">,</span>DEPARTMENT_NAME<span class="g">,</span>MANAGER_ID<span class="g">,</span>LOCATION_ID<span class="g">)</span> <span class="k">values</span> <span class="g">(</span>10<span class="g">,</span><span class="s">'Administration'</span><span class="g">,</span>200<span class="g">,</span>1700<span class="g">)</span>
<span class="k">insert</span> <span class="k">into</span> DEPARTMENTS<span class="g">(</span>DEPARTMENT_ID<span class="g">,</span>DEPARTMENT_NAME<span class="g">,</span>MANAGER_ID<span class="g">,</span>LOCATION_ID<span class="g">)</span> <span class="k">values</span> <span class="g">(</span>20<span class="g">,</span><span class="s">'Marketing'</span><span class="g">,</span>201<span class="g">,</span>1800<span class="g">)</span>
<span class="k">insert</span> <span class="k">into</span> DEPARTMENTS<span class="g">(</span>DEPARTMENT_ID<span class="g">,</span>DEPARTMENT_NAME<span class="g">,</span>MANAGER_ID<span class="g">,</span>LOCATION_ID<span class="g">)</span> <span class="k">values</span> <span class="g">(</span>50<span class="g">,</span><span class="s">'Shipping'</span><span class="g">,</span>124<span class="g">,</span>1500<span class="g">)</span>

<span class="k">select</span> <span class="g">*</span> <span class="k">from</span> DEPARTMENTS

<span class="m">update</span> DEPARTMENTS <span class="k">set</span> DEPARTMENT_NAME<span class="g">=</span><span class="s">'Mar'</span> <span class="k">where</span> DEPARTMENT_ID<span class="g">=</span>20

<span class="k">delete</span> <span class="k">from</span> DEPARTMENTS <span class="k">where</span> DEPARTMENT_ID<span class="g">=</span>50

<span class="k">insert</span> <span class="k">into</span> EMPLOYEES <span class="g">(</span>EMPLOYEE_ID<span class="g">,</span>MANAGER_ID<span class="g">,</span>DEPARTMENT_ID<span class="g">,</span>FIRST_NAME<span class="g">,</span>LAST_NAME<span class="g">,</span>EMAIL<span class="g">,</span>PHONE_NUMBER<span class="g">,</span>HIRE_DATE<span class="g">,</span>JOB_ID<span class="g">,</span>SALARY<span class="g">,</span>COMMISSION_PCT<span class="g">)</span> <span class="k">values</span><span class="g">(</span>100<span class="g">,</span><span class="s">'x'</span>

<span class="k">insert</span> <span class="k">into</span> EMPLOYEES <span class="g">(</span>EMPLOYEE_ID<span class="g">,</span>MANAGER_ID<span class="g">,</span>DEPARTMENT_ID<span class="g">,</span>FIRST_NAME<span class="g">,</span>LAST_NAME<span class="g">,</span>EMAIL<span class="g">,</span>PHONE_NUMBER<span class="g">,</span>HIRE_DATE<span class="g">,</span>JOB_ID<span class="g">,</span>SALARY<span class="g">,</span>COMMISSION_PCT<span class="g">)</span> <span class="k">values</span><span class="g">(</span>200<span class="g">,</span><span class="s">'x'</span>

<span class="k">insert</span> <span class="k">into</span> EMPLOYEES <span class="g">(</span>EMPLOYEE_ID<span class="g">,</span>MANAGER_ID<span class="g">,</span>DEPARTMENT_ID<span class="g">,</span>FIRST_NAME<span class="g">,</span>LAST_NAME<span class="g">,</span>EMAIL<span class="g">,</span>PHONE_NUMBER<span class="g">,</span>HIRE_DATE<span class="g">,</span>JOB_ID<span class="g">,</span>SALARY<span class="g">,</span>COMMISSION_PCT<span class="g">)</span> <span class="k">values</span><span class="g">(</span>300<span class="g">,</span><span class="s">'x'</span>

<span class="k">select</span> <span class="g">*</span> <span class="k">from</span> EMPLOYEES

<span class="m">update</span> EMPLOYEES <span class="k">set</span> FIRST_NAME<span class="g">=</span><span class="s">'Fang'</span> <span class="k">where</span> EMPLOYEE_ID<span class="g">=</span>200

<span class="k">delete</span> EMPLOYEES <span class="k">where</span> EMPLOYEE_ID<span class="g">=</span>300

<span class="k">insert</span> <span class="k">into</span> JOB_GRADES<span class="g">(</span>GRADE_LEVEL<span class="g">,</span>LOWEST_SAL<span class="g">,</span>HIGHEST_SAL<span class="g">)</span> <span class="k">values</span><span class="g">(</span><span class="s">'A'</span><span class="g">,</span>1000<span class="g">,</span>2999<span class="g">)</span>
<span class="k">insert</span> <span class="k">into</span> JOB_GRADES<span class="g">(</span>GRADE_LEVEL<span class="g">,</span>LOWEST_SAL<span class="g">,</span>HIGHEST_SAL<span class="g">)</span> <span class="k">values</span><span class="g">(</span><span class="s">'B'</span><span class="g">,</span>2000<span class="g">,</span>3000<span class="g">)</span></pre></div>
<div id="vs" class="abs">
<div class="abs" style="left:0;top:0;width:20px;height:17px;background:#e8ecfa;border:1px solid #a9afc0;border-top:0"></div>
<svg class="abs" style="left:5px;top:2px" width="11" height="13" viewBox="0 0 11 13" ><path d="M0 5.500h11M0 7.500h11M5.500 1v3.500M5.500 8.500V12" stroke="#1e1e1e" stroke-width="1"/><path d="M3.500 3L5.500 .5l2 2.500zM3.500 10l2 2.500 2-2.500z" fill="#1e1e1e"/></svg>
<svg class="abs" style="left:5px;top:23px" width="10" height="6" viewBox="0 0 10 6" ><path d="M0 5.500h10L5 0z" fill="#868999"/></svg>
<div class="abs" style="left:0;top:33px;width:19px;height:2px;background:#0000cd"></div>
<div class="abs" style="left:4px;top:106px;width:11px;height:113px;background:#c2c3c9"></div>
<svg class="abs" style="left:5px;top:516px" width="10" height="6" viewBox="0 0 10 6" ><path d="M0 0h10L5 5.500z" fill="#868999"/></svg>
</div>
<div id="hs" class="abs">
<div class="abs" style="left:1px;top:0;width:59px;height:17px;background:#fff;border:1px solid #ccced8"></div>
<span class="abs" style="left:3.10px;top:2.00px;font-size:12px;line-height:14px;letter-spacing:-0.575px;color:#1e1e1e;">100 %</span>
<svg class="abs" style="left:52px;top:9px" width="6" height="4" viewBox="0 0 6 4" ><path d="M0 0h6L3 3.500z" fill="#1e1e1e"/></svg>
<svg class="abs" style="left:66px;top:5px" width="6" height="10" viewBox="0 0 6 10" ><path d="M6 0v10L.5 5z" fill="#868999"/></svg>
<div class="abs" style="left:78px;top:5px;width:473px;height:9px;background:#c2c3c9"></div>
<svg class="abs" style="left:1064px;top:5px" width="6" height="10" viewBox="0 0 6 10" ><path d="M0 0v10l5.500-5z" fill="#868999"/></svg>
</div>
<div id="qs" class="abs">
<svg class="abs" style="left:5px;top:3px" width="16" height="16" viewBox="0 0 16 16" ><g transform="translate(.3 .8) scale(.78 .97)"><path d="M2 0h1.600v3.500H2zM6.400 0H8v3.500H6.400zM.5 3.500h9v3c0 1.400-1.300 2.300-2.700 2.300V14H3.200V8.800C1.800 8.800.5 7.900.5 6.500z" fill="#1e1e1e"/></g><circle cx="11" cy="11.500" r="4" fill="#339933" stroke="#f0e68c" stroke-width=".8"/><path d="M9 11.500l1.500 1.500 2.500-3" fill="none" stroke="#fff" stroke-width="1.100"/></svg>
<span class="abs" style="left:23.70px;top:4.00px;font-size:12px;line-height:14px;letter-spacing:0.041px;color:#1e1e1e;">Connected. (1/1)</span>
<div class="qsep" style="left:584px"></div><span class="abs" style="left:588.28px;top:4.00px;font-size:12px;line-height:14px;letter-spacing:-0.272px;color:#1e1e1e;">(LocalDB)\MSSQLLocalDB (13....</span>
<div class="qsep" style="left:764px"></div><span class="abs" style="left:768.94px;top:4.00px;font-size:12px;line-height:14px;letter-spacing:-0.448px;color:#1e1e1e;">DESKTOP-KG2G3RA\Admini...</span>
<div class="qsep" style="left:933px"></div><span class="abs" style="left:937.52px;top:4.00px;font-size:12px;line-height:14px;letter-spacing:-0.012px;color:#1e1e1e;">master</span>
<div class="qsep" style="left:982px"></div><span class="abs" style="left:986.58px;top:4.00px;font-size:12px;line-height:14px;letter-spacing:-0.491px;color:#1e1e1e;">00:00:00</span>
<div class="qsep" style="left:1036px"></div><span class="abs" style="left:1041.38px;top:4.00px;font-size:12px;line-height:14px;letter-spacing:-0.060px;color:#1e1e1e;">0 rows</span>
</div></div>
<div id="status" class="abs"><svg class="abs" style="left:3px;top:6px" width="20" height="12" viewBox="0 0 20 12" ><path d="M4 1h14l-3.500 10H.8z" fill="none" stroke="#fff" stroke-width="1.300"/></svg><span class="abs" style="left:26.54px;top:5.00px;font-size:12px;line-height:14px;letter-spacing:-0.580px;color:#fff;">Ready</span></div>
<div id="task" class="abs">
<div class="abs" style="left:245px;top:0;width:48px;height:40px;background:#45474d"></div>
<div class="abs" style="left:102px;top:38px;width:40px;height:2px;background:#76b9ed"></div>
<div class="abs" style="left:151px;top:38px;width:40px;height:2px;background:#76b9ed"></div>
<div class="abs" style="left:245px;top:38px;width:48px;height:2px;background:#76b9ed"></div>
<svg class="abs" style="left:15px;top:12px" width="16" height="16" viewBox="0 0 16 16" ><path d="M0 2.300L6.500 1.400V7.600H0zM7.300 1.300L16 0v7.600H7.300zM0 8.400h6.500v6.200L0 13.700zM7.300 8.400H16V16l-8.700-1.200z" fill="#fff"/></svg>
<svg class="abs" style="left:62px;top:11px" width="18" height="18" viewBox="0 0 18 18" ><circle cx="11" cy="7" r="5.500" fill="none" stroke="#fff" stroke-width="1.500"/><path d="M7 11L1 17" stroke="#fff" stroke-width="1.700"/></svg>
<svg class="abs" style="left:110px;top:10px" width="24" height="20" viewBox="0 0 24 20" ><path d="M1 1h8l2 2.500h12v15H1z" fill="#f6c343"/><path d="M1 6h22v12.500H1z" fill="#fbd969"/><path d="M4 11h16v7.500H4z" fill="#3b8ad9"/><path d="M8 14.500h8v4H8z" fill="#fbd969"/></svg>
<svg class="abs" style="left:159px;top:8px" width="24" height="24" viewBox="0 0 24 24" ><circle cx="12" cy="12" r="12" fill="#fff"/><path d="M12 12L1.600 6A12 12 0 0 1 22.400 6z" fill="#e33b2e"/><path d="M12 12L22.400 6A12 12 0 0 1 12 24z" fill="#fbc116"/><path d="M12 12L12 24A12 12 0 0 1 1.600 6z" fill="#2ba24c"/><path d="M1.600 6A12 12 0 0 1 22.400 6H12z" fill="#e33b2e"/><circle cx="12" cy="12" r="5.500" fill="#fff"/><circle cx="12" cy="12" r="4.300" fill="#4a8af4"/></svg>
<svg class="abs" style="left:207px;top:8px" width="25" height="25" viewBox="0 0 25 25" ><path d="M12.500 .5a12 12 0 0 0-10.300 18L.5 24.500l6.200-1.600A12 12 0 1 0 12.500 .5z" fill="#fff"/><path d="M12.500 2.300a10.200 10.200 0 0 0-8.600 15.600L3 21.800l4-1A10.200 10.200 0 1 0 12.500 2.300z" fill="#2cb742"/><path d="M8.600 6.800c.5-.5 1.200-.4 1.500.2l.9 2c.2.500 0 .9-.4 1.300l-.5.600c.8 1.500 2 2.700 3.600 3.500l.7-.8c.4-.4.800-.5 1.300-.3l1.900 1c.6.300.7 1 .3 1.500-.9 1.200-2.300 1.600-3.700 1.100-3.300-1.100-5.800-3.600-6.800-6.800-.4-1.300 0-2.500 1.200-3.300z" fill="#fff"/></svg>
<svg class="abs" style="left:257px;top:8px" width="26" height="26" viewBox="0 0 26 26" ><path d="M2.700 3.500c0-3.200 12-3.200 12 0v10c0 3.200-12 3.200-12 0z" fill="#f7c92f"/><path d="M2.700 3.500c0-3.200 6-3.200 6-2.400v15.200c-3 0-6-.8-6-2.800z" fill="#f9d24e"/><ellipse cx="8.700" cy="3.500" rx="6" ry="2.300" fill="#f2a83c"/><path d="M17.500 1.500h5v5M1.500 17.500v5h5" fill="none" stroke="#3fae49" stroke-width="1.900"/><path d="M10 11.500l10.500 9.500M20.500 11.500L10 21" stroke="#1f7ad1" stroke-width="2.700"/></svg>
<svg class="abs" style="left:1045px;top:10px" width="22" height="22" viewBox="0 0 22 22" ><circle cx="10.500" cy="10.500" r="9.600" fill="#1e8fe0" stroke="#fff" stroke-width="1.700"/><text x="10.500" y="16" font-family="Liberation Sans" font-weight="bold" font-size="15" fill="#fff" text-anchor="middle">?</text><circle cx="18.300" cy="17" r="4.400" fill="#e81123"/><path d="M18.300 14.300v3.300M18.300 18.600v1.200" stroke="#fff" stroke-width="1.200"/></svg>
<svg class="abs" style="left:1083px;top:13px" width="26" height="16" viewBox="0 0 26 16" ><path d="M6 15.500a5 5 0 0 1-.5-10A7 7 0 0 1 18.500 5a5.300 5.300 0 0 1 1.500 10.500z" fill="#9fc4ee"/><path d="M6 15.500a5 5 0 0 1 1-9.500c2 0 3.500 1 4.500 2.500 2-1 5-.5 6 2 3 0 4 3 2.500 5z" fill="#c6dcf5"/></svg>
<svg class="abs" style="left:1125px;top:16px" width="13" height="8" viewBox="0 0 13 8" ><path d="M1 7l5.500-5.500L12 7" fill="none" stroke="#fff" stroke-width="1.400"/></svg>
<svg class="abs" style="left:1147px;top:13px" width="17" height="14" viewBox="0 0 17 14" ><path d="M5.500 3.500h10v8h-10z" fill="none" stroke="#fff" stroke-width="1.100"/><path d="M15.500 6h1.500v3h-1.500z" fill="#fff"/><path d="M1.500 0v3M4.500 0v3M0 3h6v2.500c0 1.500-1 2.200-2.300 2.200V11h-1.400V7.700C1 7.700 0 7 0 5.500z" fill="#fff" stroke="#fff" stroke-width=".8"/></svg>
<svg class="abs" style="left:1173px;top:12px" width="15" height="15" viewBox="0 0 15 15" ><path d="M14 1A13 13 0 0 0 1 14" fill="none" stroke="#9a9a9a" stroke-width="1.200"/><path d="M14 5a9 9 0 0 0-9 9" fill="none" stroke="#fff" stroke-width="1.200"/><path d="M14 9a5 5 0 0 0-5 5" fill="none" stroke="#fff" stroke-width="1.200"/><circle cx="13" cy="13" r="1.500" fill="#fff"/></svg>
<svg class="abs" style="left:1196px;top:13px" width="17" height="14" viewBox="0 0 17 14" ><path d="M.5 4.500h3l4-4v13l-4-4h-3z" fill="none" stroke="#fff" stroke-width="1.100"/><path d="M9.500 4.500a3.500 3.500 0 0 1 0 5M11.500 2.500a6 6 0 0 1 0 9M13.500 .8a8.500 8.500 0 0 1 0 12.400" fill="none" stroke="#fff" stroke-width="1"/></svg>
<svg class="abs" style="left:1220px;top:14px" width="24" height="12" viewBox="0 0 24 12" ><path d="M.5 .5h23v11H.5z" fill="none" stroke="#fff" stroke-width="1"/><path d="M3 3.500h18M3 5.800h18" stroke="#fff" stroke-width="1.200" stroke-dasharray="1.400 1"/><path d="M5.500 8.500h13" stroke="#fff" stroke-width="1.200"/></svg>
<span class="abs" style="left:1258.50px;top:4.00px;font-size:12px;line-height:14px;letter-spacing:-0.240px;color:#fff;">1:44 PM</span>
<span class="abs" style="left:1253.60px;top:21.00px;font-size:12px;line-height:14px;letter-spacing:-0.090px;color:#fff;">1/20/2023</span>
<svg class="abs" style="left:1323px;top:12px" width="24" height="24" viewBox="0 0 24 24" ><path d="M1 .8h14.500v11.500H7l-2.500 3v-3H1z" fill="#fff"/><path d="M3.500 4h9.500M3.500 6.500h9.500M3.500 9h6" stroke="#1b1d25" stroke-width="1"/><circle cx="16" cy="16" r="6" fill="#2a2829" stroke="#bdbdbd" stroke-width="1"/><text x="16" y="20" font-family="Liberation Sans" font-size="10.500" fill="#fff" text-anchor="middle">1</text></svg>
</div>
</body></html>
